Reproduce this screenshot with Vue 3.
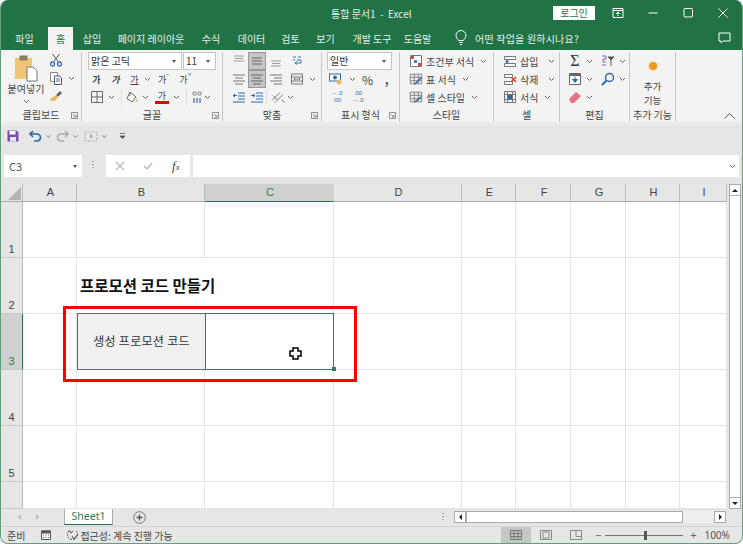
<script setup>
const tabs = [
  { name: '파일', w: 47 },
  { name: '홈', w: 25, active: true },
  { name: '삽입', w: 38 },
  { name: '페이지 레이아웃', w: 80 },
  { name: '수식', w: 40 },
  { name: '데이터', w: 41 },
  { name: '검토', w: 37 },
  { name: '보기', w: 33 },
  { name: '개발 도구', w: 60 },
  { name: '도움말', w: 31 },
]

const columns = [
  { name: 'A', w: 54 },
  { name: 'B', w: 128 },
  { name: 'C', w: 129, selected: true },
  { name: 'D', w: 128 },
  { name: 'E', w: 54 },
  { name: 'F', w: 55 },
  { name: 'G', w: 55 },
  { name: 'H', w: 54 },
  { name: 'I', w: 47 },
]

const rows = [
  { name: '1', h: 56 },
  { name: '2', h: 56 },
  { name: '3', h: 56, selected: true },
  { name: '4', h: 56 },
  { name: '5', h: 56 },
  { name: '', h: 27 },
]

const gridColumns = '22px ' + columns.map(c => c.w + 'px').join(' ')
const gridRows = '18px ' + rows.map(r => r.h + 'px').join(' ')

const cellClass = (col, row) => ({
  label: col.name === 'B' && row.name === '3',
  active: col.name === 'C' && row.name === '3',
  heading: col.name === 'B' && row.name === '2',
})

const cellText = (col, row) => {
  if (col.name === 'B' && row.name === '2') return '프로모션 코드 만들기'
  if (col.name === 'B' && row.name === '3') return '생성 프로모션 코드'
  return ''
}
</script>

<template>
  <div class="window">
    <svg class="defs" width="0" height="0">
      <symbol id="chev" viewBox="0 0 7 5"><path d="M1 1l2.500 2.500L6 1" fill="none" stroke="#666" stroke-width="1" /></symbol>
      <symbol id="lines" viewBox="0 0 14 12"><path d="M1 2h12M3 5h8M1 8h12M3 11h8" stroke="#777" stroke-width="1" /></symbol>
      <symbol id="launcher" viewBox="0 0 7 7"><path d="M.5.5h6v6h-6zM2 2l3 3M5 3v2H3" fill="none" stroke="#777" stroke-width=".8" /></symbol>
      <symbol id="tablecell" viewBox="0 0 16 14"><path d="M1.500 1.500h13v11h-13zM1.500 5h13M1.500 9h13M6 1.500v11M10.500 1.500v11" fill="none" stroke="#777" /></symbol>
    </svg>

    <header class="titlebar">
      <div class="doc-title">통합 문서1&nbsp; - &nbsp;Excel</div>
      <button class="login">로그인</button>
      <svg class="win-ic first" viewBox="0 0 12 10"><path d="M1 .5h10v9H1zM1 2.500h10M6 8V4M4 6l2-2 2 2" fill="none" stroke="#fff" /></svg>
      <svg class="win-ic" viewBox="0 0 12 10"><path d="M1.500 5h9" stroke="#fff" /></svg>
      <svg class="win-ic" viewBox="0 0 12 10"><rect x="2" y=".5" width="8.500" height="8.500" rx="1" fill="none" stroke="#fff" /></svg>
      <svg class="win-ic" viewBox="0 0 12 10"><path d="M1.500 .5l9 9M10.500 .5l-9 9" stroke="#fff" /></svg>
    </header>

    <nav class="tabs">
      <div v-for="t in tabs" :key="t.name" class="tab" :class="{ active: t.active }" :style="{ width: t.w + 'px' }">{{ t.name }}</div>
      <svg class="bulb" viewBox="0 0 12 15"><path d="M3.500 10.500C3 8.500 1 8 1 5.500a5 5 0 0 1 10 0c0 2.500-2 3-2.500 5zM4 12.500h4M5 14.500h2" fill="none" stroke="#fff" /></svg>
      <div class="tell-me">어떤 작업을 원하시나요?</div>
      <svg class="comment" viewBox="0 0 13 12"><path d="M1 1h11v8H5l-2 2V9H1z" fill="none" stroke="#fff" /></svg>
    </nav>

    <section class="ribbon">
      <div class="group g-clip">
        <div class="clip-body">
          <div class="paste">
            <svg class="paste-ic" viewBox="0 0 24 28">
              <rect x="1" y="4" width="17" height="21" fill="#f0c578" />
              <rect x="5.500" y="1.500" width="8" height="5" fill="#8a7a66" />
              <path d="M13 13h6l4 4v10H13z" fill="#fff" stroke="#777" />
            </svg>
            <div class="paste-text">붙여넣기</div>
            <svg class="chev"><use href="#chev" /></svg>
          </div>
          <div class="clip-tools">
            <svg class="ic" viewBox="0 0 14 14"><path d="M3.500 1l6 8M10.500 1l-6 8" stroke="#555" /><circle cx="3.500" cy="11" r="2" fill="none" stroke="#3d72b0" stroke-width="1.300" /><circle cx="10.500" cy="11" r="2" fill="none" stroke="#3d72b0" stroke-width="1.300" /></svg>
            <div class="clip-copy">
              <svg class="ic" viewBox="0 0 14 14"><path d="M1.500 1.500h7v9h-7z" fill="#fff" stroke="#888" /><path d="M5.500 5h5l2 2v6.500h-7z" fill="#fff" stroke="#555" /><path d="M7 8h4M7 10h4" stroke="#3d72b0" /></svg>
              <svg class="chev"><use href="#chev" /></svg>
            </div>
            <svg class="ic" viewBox="0 0 14 14"><path d="M7 6l4-4 2 2-4 4z" fill="#666" /><path d="M7 6l2 2-3 4H2l-1-2z" fill="#e8b75e" /></svg>
          </div>
        </div>
        <div class="group-label">클립보드<svg class="launch"><use href="#launcher" /></svg></div>
      </div>

      <div class="group g-font">
        <div class="group-body">
          <div class="line">
            <div class="combo font-name">맑은 고딕<span class="caret"></span></div>
            <div class="combo font-size">11<span class="caret"></span></div>
          </div>
          <div class="line font-line2">
            <span class="ga slot bold">가</span>
            <span class="ga slot bold italic">가</span>
            <span class="ga slot under">가</span>
            <svg class="chev"><use href="#chev" /></svg>
            <span class="ga slot grow">가<sup>ˆ</sup></span>
            <span class="ga slot shrink">가<sup>ˇ</sup></span>
          </div>
          <div class="line font-line3">
            <svg class="ic border-ic" viewBox="0 0 14 14"><path d="M1.500 1.500h11v11h-11zM7 1.500v11M1.500 7h11" fill="none" stroke="#666" /></svg>
            <svg class="chev"><use href="#chev" /></svg>
            <i class="vsep"></i>
            <svg class="ic bucket" viewBox="0 0 14 14"><path d="M5 2l6 5-4 5-5-3.500z" fill="#fff" stroke="#666" /><path d="M5 2v4" stroke="#666" /><path d="M12 8c-1 2-1.200 4 0 4s1-2 0-4z" fill="#e8b75e" /></svg>
            <svg class="chev"><use href="#chev" /></svg>
            <span class="font-color">가</span>
            <svg class="chev"><use href="#chev" /></svg>
            <i class="vsep"></i>
            <svg class="ic" viewBox="0 0 14 14"><path d="M3 2h3v3H3zM8 2h3v3H8z" fill="none" stroke="#777" stroke-width=".8" /><path d="M4 8v5M7 8v5M10 8v5" stroke="#2d68ad" stroke-width="1.200" /></svg>
            <svg class="chev"><use href="#chev" /></svg>
          </div>
        </div>
        <div class="group-label">글꼴<svg class="launch"><use href="#launcher" /></svg></div>
      </div>

      <div class="group g-align">
        <div class="group-body">
          <div class="align-grid">
            <svg class="ic" viewBox="0 0 14 12"><path d="M2 1h10M3 3.500h8M2 6h10" stroke="#999" /></svg>
            <div class="sel"><svg class="ic" viewBox="0 0 14 12"><path d="M2 3h10M2 6h10M2 9h10" stroke="#666" /></svg></div>
            <svg class="ic" viewBox="0 0 14 12"><path d="M2 6h10M3 8.500h8M2 11h10" stroke="#999" /></svg>
            <svg class="ic wrap-ic" viewBox="0 0 14 12"><path d="M3 2h3M8 2h3M3 5h2M7 5h4M11 5v3H5M7 6.500L5 8l2 1.500" fill="none" stroke="#2d68ad" stroke-width=".9" /></svg>
            <svg class="ic"><use href="#lines" /></svg>
            <div class="sel"><svg class="ic" viewBox="0 0 14 12"><path d="M1 2h12M3 5h8M1 8h12M3 11h8" stroke="#666" /></svg></div>
            <svg class="ic" viewBox="0 0 14 12"><path d="M1 2h12M5 5h8M1 8h12M5 11h8" stroke="#777" /></svg>
            <div class="merge">
              <svg class="ic" viewBox="0 0 14 13"><path d="M1.500 1.500h11v10h-11zM1.500 4.500h11M1.500 8.500h11M4 6.500h6M5 5.500L4 6.500l1 1M9 5.500l1 1-1 1" fill="none" stroke="#777" /></svg>
              <svg class="chev"><use href="#chev" /></svg>
            </div>
            <svg class="ic" viewBox="0 0 14 12"><path d="M6 2h7M6 5h7M6 8h7M1 11h12M5 4.500H1M3 3L1 4.500 3 6" fill="none" stroke="#2d68ad" /></svg>
            <svg class="ic" viewBox="0 0 14 12"><path d="M6 2h7M6 5h7M6 8h7M1 11h12M1 4.500h4M3 3l2 1.500L3 6" fill="none" stroke="#2d68ad" /></svg>
            <div class="orient">
              <svg class="ic" viewBox="0 0 14 13"><path d="M1 10L9 2M4 12l8-8M2 5l4 4M11 9l2 3" fill="none" stroke="#777" /></svg>
              <svg class="chev"><use href="#chev" /></svg>
            </div>
          </div>
        </div>
        <div class="group-label">맞춤<svg class="launch"><use href="#launcher" /></svg></div>
      </div>

      <div class="group g-num">
        <div class="group-body">
          <div class="line"><div class="combo num-format">일반<span class="caret"></span></div></div>
          <div class="line num-line">
            <svg class="ic" viewBox="0 0 14 12"><rect x=".5" y="1" width="11" height="7" fill="#fff" stroke="#2d68ad" /><circle cx="6" cy="4.500" r="2" fill="#2d68ad" /><circle cx="10" cy="9" r="2.500" fill="#e8b75e" /></svg>
            <svg class="chev"><use href="#chev" /></svg>
            <span class="percent">%</span>
            <span class="comma">,</span>
          </div>
          <div class="line num-line3">
            <span class="dec">←.0<br />.00</span>
            <span class="dec">.00<br />→.0</span>
          </div>
        </div>
        <div class="group-label">표시 형식<svg class="launch"><use href="#launcher" /></svg></div>
      </div>

      <div class="group g-style">
        <div class="group-body">
          <div class="line list-line">
            <svg class="ic" viewBox="0 0 14 14"><path d="M1.500 1.500h11v11h-11z" fill="#fff" stroke="#777" /><path d="M2 2h3v3H2zM9 9h3v3H9z" fill="#c0504d" /><path d="M5 6h3v3H5z" fill="#4f81bd" /></svg>
            <span>조건부 서식</span><svg class="chev"><use href="#chev" /></svg>
          </div>
          <div class="line list-line">
            <svg class="ic" viewBox="0 0 14 14"><use href="#tablecell" /><path d="M13 6l-6 6-2 1 1-2 6-6z" fill="#2d68ad" /></svg>
            <span>표 서식</span><svg class="chev"><use href="#chev" /></svg>
          </div>
          <div class="line list-line">
            <svg class="ic" viewBox="0 0 14 14"><use href="#tablecell" /><path d="M13 7l-6 5-2 1 1-2 6-5z" fill="#2d68ad" /></svg>
            <span>셀 스타일</span><svg class="chev"><use href="#chev" /></svg>
          </div>
        </div>
        <div class="group-label">스타일</div>
      </div>

      <div class="group g-cell">
        <div class="group-body">
          <div class="line list-line">
            <svg class="ic" viewBox="0 0 14 14"><path d="M1.500 2.500h11v3h-11zM1.500 9.500h11v3h-11z" fill="#fff" stroke="#777" /><path d="M4 6v3M2.500 7.500h3" stroke="#2d68ad" stroke-width="1.400" /></svg>
            <span>삽입</span><svg class="chev far"><use href="#chev" /></svg>
          </div>
          <div class="line list-line">
            <svg class="ic" viewBox="0 0 14 14"><path d="M1.500 2.500h8v3h-8zM1.500 9.500h8v3h-8z" fill="#fff" stroke="#777" /><path d="M8 5l5 5M13 5l-5 5" stroke="#d83b2c" stroke-width="1.400" /></svg>
            <span>삭제</span><svg class="chev far"><use href="#chev" /></svg>
          </div>
          <div class="line list-line">
            <svg class="ic" viewBox="0 0 14 14"><path d="M1.500 1.500h11v11h-11zM4.500 1.500v11M9.500 1.500v11M1.500 4.500h11M1.500 9.500h11" fill="none" stroke="#777" /><path d="M5 5h4v4H5z" fill="#2d68ad" /></svg>
            <span>서식</span><svg class="chev"><use href="#chev" /></svg>
          </div>
        </div>
        <div class="group-label">셀</div>
      </div>

      <div class="group g-edit">
        <div class="group-body">
          <div class="line edit-line">
            <span class="sigma">Σ</span><svg class="chev"><use href="#chev" /></svg>
            <svg class="ic narrow" viewBox="0 0 14 14"><path d="M1 2h4M5 2v3H2v3h3M1 11h4" fill="none" stroke="#8d5fb3" /><path d="M7 3h6l-3 3zM10 6v6" fill="#555" stroke="#555" /></svg><svg class="chev"><use href="#chev" /></svg>
          </div>
          <div class="line edit-line">
            <svg class="ic" viewBox="0 0 14 14"><path d="M1.500 1.500h11v11h-11z" fill="#fff" stroke="#666" /><path d="M1 3h12" stroke="#666" stroke-width="2" /><path d="M7 4.500v5M4.500 7.500L7 10.500l2.500-3z" fill="#2d68ad" stroke="#2d68ad" /></svg>
            <svg class="chev"><use href="#chev" /></svg>
            <svg class="ic narrow" viewBox="0 0 14 14"><circle cx="8.500" cy="5.500" r="4" fill="none" stroke="#2d68ad" stroke-width="1.500" /><path d="M5.500 8.500L1 13" stroke="#2d68ad" stroke-width="2" /></svg><svg class="chev"><use href="#chev" /></svg>
          </div>
          <div class="line edit-line">
            <svg class="ic" viewBox="0 0 14 14"><path d="M1 9l7-7 5 4-7 7H3z" fill="#e8708a" /></svg>
            <svg class="chev"><use href="#chev" /></svg>
          </div>
        </div>
        <div class="group-label">편집</div>
      </div>

      <div class="group g-addin">
        <div class="group-body addin-body">
          <i class="dot"></i>
          <div class="addin-text">추가<br />기능</div>
        </div>
        <div class="group-label">추가 기능</div>
      </div>

      <svg class="collapse" viewBox="0 0 11 6"><path d="M.5 5.500l5-5 5 5" fill="none" stroke="#555" /></svg>
    </section>

    <div class="qat">
      <svg class="qat-ic save" viewBox="0 0 12 12"><path d="M.5.5h9l2 2v9H.5z" fill="#7a4fa5" /><path d="M2.500 1h6v3.500h-6z" fill="#fff" /><path d="M3 7h6v4.500H3z" fill="#e8dff0" /></svg>
      <svg class="qat-ic undo" viewBox="0 0 13 12"><path d="M4 1L1 4l3 3M1 4h7a3.500 3.500 0 0 1 0 7H5" fill="none" stroke="#2d68ad" stroke-width="1.700" /></svg>
      <svg class="chev"><use href="#chev" /></svg>
      <svg class="qat-ic redo" viewBox="0 0 13 12"><path d="M9 1l3 3-3 3M12 4H5a3.500 3.500 0 0 0 0 7h3" fill="none" stroke="#aaa" stroke-width="1.700" /></svg>
      <svg class="chev"><use href="#chev" /></svg>
      <svg class="qat-ic touch" viewBox="0 0 14 12"><path d="M1 2h12v9H1z" fill="none" stroke="#aaa" stroke-dasharray="2 1.500" /><path d="M6 4l3 2-3 3z" fill="#aaa" /></svg>
      <svg class="chev"><use href="#chev" /></svg>
      <svg class="qat-more" viewBox="0 0 5 6"><path d="M0 .5h5M0 3l2.500 2.500L5 3z" fill="#555" stroke="#555" stroke-width=".7" /></svg>
    </div>

    <div class="formula-bar">
      <div class="name-box">C3<span class="caret"></span></div>
      <div class="grip"></div>
      <div class="fx-box">
        <svg class="fx-ic" viewBox="0 0 10 10"><path d="M1 1l8 8M9 1L1 9" stroke="#bbb" stroke-width="1.200" /></svg>
        <svg class="fx-ic" viewBox="0 0 10 10"><path d="M1 5l3 3 5-6" fill="none" stroke="#bbb" stroke-width="1.500" /></svg>
        <span class="fx">f<small>x</small></span>
      </div>
      <div class="formula-input"><svg class="chev"><use href="#chev" /></svg></div>
    </div>

    <div class="sheet-area">
      <div class="sheet" :style="{ gridTemplateColumns: gridColumns, gridTemplateRows: gridRows }">
        <div class="corner"><i></i></div>
        <div v-for="c in columns" :key="c.name" class="col-head" :class="{ on: c.selected }">{{ c.name }}</div>
        <template v-for="r in rows" :key="r.name">
          <div class="row-head" :class="{ on: r.selected }">{{ r.name }}</div>
          <div v-for="c in columns" :key="c.name" class="cell" :class="cellClass(c, r)">{{ cellText(c, r) }}</div>
        </template>
        <div class="red-box"></div>
        <i class="handle"></i>
        <svg class="cursor" viewBox="0 0 13 13"><path d="M4 1h5v3h3v5H9v3H4V9H1V4h3z" fill="#fff" stroke="#000" stroke-width="1.500" /></svg>
      </div>
      <div class="vscroll">
        <div class="sb-btn"><i class="tri up"></i></div>
        <div class="sb-thumb"></div>
        <div class="sb-btn"><i class="tri down"></i></div>
      </div>
    </div>

    <div class="sheet-tabs">
      <i class="nav-tri left"></i>
      <i class="nav-tri right"></i>
      <div class="sheet-tab">Sheet1</div>
      <svg class="add-sheet" viewBox="0 0 13 13"><circle cx="6.500" cy="6.500" r="5.800" fill="none" stroke="#777" /><path d="M6.500 3.500v6M3.500 6.500h6" stroke="#555" stroke-width="1.300" /></svg>
      <div class="grip tab-grip"></div>
      <div class="hscroll">
        <div class="sb-btn"><i class="tri lf"></i></div>
        <div class="h-thumb"></div>
        <div class="h-rest"></div>
        <div class="sb-btn"><i class="tri rt"></i></div>
      </div>
    </div>

    <footer class="status">
      <span class="ready">준비</span>
      <svg class="st-ic macro" viewBox="0 0 10 10"><path d="M.5 1h9v8.500h-9z" fill="#fff" stroke="#555" /><path d="M.5 1h9v2h-9zM2 5h1M4.500 5h1M7 5h1M2 7.500h1M4.500 7.500h1M7 7.500h1" fill="#555" stroke="#555" /></svg>
      <svg class="st-ic access" viewBox="0 0 13 12"><path d="M3 2a5 5 0 1 0 7 0" fill="none" stroke="#555" stroke-dasharray="2 1" /><path d="M3 1l2 3 2-2M6 7l2 3 4-5" fill="none" stroke="#444" /></svg>
      <span class="access-text">접근성: 계속 진행 가능</span>
      <div class="views">
        <div class="view on"><svg viewBox="0 0 12 10"><path d="M.5.5h11v9H.5zM.5 3.500h11M.5 6.500h11M4 .5v9M8 .5v9" fill="none" stroke="#777" /></svg></div>
        <div class="view"><svg viewBox="0 0 12 10"><path d="M.5.5h11v9H.5zM3 2h6v6H3z" fill="none" stroke="#888" /></svg></div>
        <div class="view"><svg viewBox="0 0 12 10"><path d="M.5.5h11v9H.5zM6 .5v6h5.500" fill="none" stroke="#888" /></svg></div>
      </div>
      <span class="zoom-sign">−</span>
      <div class="slider"><i></i></div>
      <span class="zoom-sign">+</span>
      <span class="zoom-val">100%</span>
    </footer>
  </div>
</template>

<style scoped>
.window {
  width: 743px;
  height: 544px;
  box-sizing: border-box;
  border: 1.5px solid #5f9f80;
  border-top: 0;
  border-radius: 8px;
  overflow: hidden;
  background: #e6e6e6;
  font-family: "Noto Sans CJK KR", "Noto Sans", sans-serif;
  font-size: 10px;
  color: #444;
  display: flex;
  flex-direction: column;
}
.defs { position: absolute; }
.chev { width: 7px; height: 5px; flex: none; }
.ic { width: 14px; height: 14px; flex: none; }

.titlebar {
  height: 26px;
  background: #217346;
  display: flex;
  align-items: center;
  padding-left: 330px;
  color: #e6f0ea;
  flex: none;
}
.doc-title { width: 222px; white-space: nowrap; }
.login {
  width: 42px;
  height: 14px;
  padding: 0;
  border: 0;
  background: #fff;
  color: #217346;
  font: inherit;
  line-height: 14px;
}
.win-ic { width: 12px; height: 10px; margin-left: 23px; flex: none; }
.win-ic.first { margin-left: 17px; }

.tabs {
  height: 24px;
  background: #217346;
  display: flex;
  align-items: flex-end;
  flex: none;
  color: #e6f0ea;
}
.tab { height: 23px; line-height: 23px; text-align: center; flex: none; white-space: nowrap; }
.tab.active { background: #f3f3f3; color: #217346; }
.bulb { width: 12px; height: 15px; margin: 0 0 5px 22px; flex: none; }
.tell-me { height: 23px; line-height: 23px; margin-left: 8px; white-space: nowrap; letter-spacing: .2px; }
.comment { width: 13px; height: 12px; margin: 0 0 6px 139px; flex: none; }

.ribbon {
  height: 72px;
  background: #f3f3f3;
  display: flex;
  flex: none;
  position: relative;
  border-bottom: 3px solid #ebebeb;
}
.group {
  height: 70px;
  margin-top: 2px;
  box-sizing: border-box;
  border-right: 1px solid #c8c8c8;
  display: flex;
  flex-direction: column;
  flex: none;
}
.group-body { height: 55px; flex: none; }
.group-label {
  position: relative;
  height: 15px;
  line-height: 15px;
  text-align: center;
  white-space: nowrap;
  color: #444;
}
.launch { position: absolute; right: 3px; top: 5px; width: 7px; height: 7px; }
.line { height: 18px; display: flex; align-items: center; }

.g-clip { width: 81px; }
.clip-body { height: 55px; display: flex; flex: none; }
.paste { width: 45px; display: flex; flex-direction: column; align-items: center; padding-left: 5px; box-sizing: border-box; }
.paste-ic { width: 24px; height: 28px; flex: none; margin-top: 2px; }
.paste-text { line-height: 13px; white-space: nowrap; }
.paste .chev { margin-top: 4px; }
.clip-tools { display: flex; flex-direction: column; gap: 4px; padding-left: 3px; margin-top: 1px; }
.clip-copy { display: flex; align-items: center; gap: 5px; }

.g-font { width: 141px; }
.combo {
  position: relative;
  height: 18px;
  box-sizing: border-box;
  background: #fff;
  border: 1px solid #c6c6c6;
  line-height: 15px;
  padding-left: 2px;
  color: #333;
}
.caret { position: absolute; border: 2.5px solid transparent; border-top: 3px solid #555; border-bottom: 0; right: 5px; top: 7px; }
.font-name { width: 94px; margin-left: 6px; }
.font-size { width: 33px; margin-left: 1px; }
.ga { font-weight: 400; color: #444; }
.slot { width: 19px; text-align: center; flex: none; font-size: 9px; }
.bold { font-weight: 700; }
.italic { font-style: italic; }
.under { text-decoration: underline; }
sup { font-size: 7px; line-height: 0; color: #2d68ad; }
.font-line2 { padding-left: 5px; }
.grow { margin-left: 3px; }
.shrink { margin-left: 3px; }
.font-line3 { padding-left: 8px; }
.border-ic { margin-right: 4px; }
.vsep { width: 1px; height: 16px; background: #dcdcdc; margin: 0 3px 0 6px; flex: none; }
.bucket { margin-right: 3px; }
.font-color {
  width: 14px;
  margin: 0 4px 0 6px;
  text-align: center;
  line-height: 11px;
  font-size: 9px;
  border-bottom: 3px solid #e00000;
}

.g-align { width: 99px; }
.align-grid {
  display: grid;
  grid-template-columns: 18px 18px 19px 36px;
  grid-auto-rows: 18px;
  padding-left: 7px;
  justify-items: center;
  align-items: center;
}
.sel {
  width: 18px;
  height: 18px;
  box-sizing: border-box;
  background: #c6c6c6;
  border: 1px solid #999;
  display: flex;
  align-items: center;
  justify-content: center;
}
.wrap-ic { justify-self: start; margin-left: 5px; }
.merge { display: flex; align-items: center; gap: 5px; justify-self: start; padding-left: 5px; }
.orient { display: flex; align-items: center; gap: 2px; grid-column: 3 / 5; justify-self: start; border-left: 1px solid #dcdcdc; padding-left: 4px; }

.g-num { width: 78px; }
.num-format { width: 65px; margin-left: 5px; }
.num-line { padding-left: 7px; gap: 6px; }
.percent { font-size: 12px; }
.comma { font-size: 11px; font-weight: 700; margin-left: 6px; line-height: 8px; }
.num-line3 { padding-left: 8px; gap: 7px; }
.dec {
  font-family: "Liberation Sans", sans-serif;
  font-size: 6px;
  line-height: 7px;
  color: #2d68ad;
  width: 14px;
  text-align: center;
  white-space: nowrap;
}

.g-style { width: 94px; }
.list-line { padding-left: 9px; gap: 3px; white-space: nowrap; }
.list-line .chev { margin-left: 3px; }
.g-cell { width: 66px; }
.g-cell .list-line .far { margin-left: 7px; }

.g-edit { width: 70px; }
.edit-line { padding-left: 8px; gap: 4px; }
.sigma { width: 14px; text-align: center; font-size: 16px; line-height: 16px; color: #333; font-family: "Liberation Serif", serif; flex: none; }
.narrow { margin-left: 4px; }

.g-addin { width: 46px; }
.addin-body { display: flex; flex-direction: column; align-items: center; }
.dot { width: 8px; height: 8px; border-radius: 50%; background: #f59a1c; box-shadow: 0 0 2px #f8c070; margin-top: 10px; }
.addin-text { margin-top: 9px; font-size: 9.6px; line-height: 14px; text-align: center; }
.collapse { width: 11px; height: 6px; position: absolute; left: 723px; top: 63px; }

.qat {
  height: 22px;
  display: flex;
  align-items: center;
  padding-left: 6px;
  flex: none;
}
.qat .chev { transform: scale(.8); }
.qat-ic { height: 12px; width: 12px; flex: none; }
.undo { margin-left: 10px; width: 13px; margin-right: 3px; }
.redo { margin-left: 4px; width: 13px; margin-right: 3px; }
.touch { margin-left: 5px; width: 14px; margin-right: 3px; }
.qat-more { width: 5px; height: 6px; margin-left: 12px; }

.formula-bar {
  height: 22px;
  margin-top: 8px;
  display: flex;
  flex: none;
  padding-left: 3px;
  padding-right: 3px;
}
.name-box {
  position: relative;
  width: 78px;
  background: #fff;
  font-size: 11px;
  line-height: 22px;
  padding-left: 5px;
  box-sizing: border-box;
  color: #555;
}
.name-box .caret { top: 10px; }
.grip {
  width: 2px;
  height: 9px;
  margin: 6px 12px 0 10px;
  flex: none;
  background: repeating-linear-gradient(#aaa 0 1px, transparent 1px 3px);
}
.fx-box {
  width: 84px;
  background: #fff;
  display: flex;
  align-items: center;
  padding-left: 9px;
  box-sizing: border-box;
  gap: 18px;
  flex: none;
}
.fx-ic { width: 10px; height: 10px; flex: none; }
.fx { font-family: "Liberation Serif", serif; font-style: italic; font-size: 13px; color: #444; margin-left: 1px; }
.fx small { font-size: 9px; }
.formula-input {
  margin-left: 3px;
  flex: 1;
  background: #fff;
  display: flex;
  align-items: center;
  justify-content: flex-end;
  padding-right: 3px;
}

.sheet-area {
  height: 325px;
  margin-top: 7px;
  display: flex;
  flex: none;
}
.sheet { display: grid; position: relative; width: 726px; height: 325px; background: #fff; overflow: hidden; flex: none; }
.corner { background: #e6e6e6; border-right: 1px solid #bbb; border-bottom: 1px solid #aaa; position: relative; box-sizing: border-box; }
.corner i {
  position: absolute;
  right: 1px;
  bottom: 1px;
  border-style: solid;
  border-width: 0 0 13px 13px;
  border-color: transparent transparent #b4b4b4 transparent;
}
.col-head {
  background: #e6e6e6;
  border-right: 1px solid #bbb;
  border-bottom: 1px solid #aaa;
  box-sizing: border-box;
  padding-left: 2px;
  text-align: center;
  font-family: "Liberation Sans", sans-serif;
  font-size: 11px;
  line-height: 17px;
  color: #444;
}
.col-head.on { background: #d0d0d0; color: #2f7d55; border-bottom: 1.5px solid #217346; border-right-color: #d0d0d0; }
.row-head {
  background: #e6e6e6;
  border-right: 1px solid #bbb;
  border-bottom: 1px solid #c8c8c8;
  box-sizing: border-box;
  display: flex;
  align-items: flex-end;
  justify-content: center;
  padding-bottom: 2px;
  font-family: "Liberation Sans", sans-serif;
  font-size: 11px;
  color: #444;
}
.row-head.on { background: #d0d0d0; color: #2f7d55; border-right: 1.5px solid #217346; }
.cell {
  border-right: 1px solid #e4e4e4;
  border-bottom: 1px solid #e4e4e4;
  box-sizing: border-box;
  min-width: 0;
}
.cell.heading {
  border-right: 0;
  font-size: 15.5px;
  font-weight: 700;
  color: #111;
  line-height: 54px;
  padding-left: 3px;
  white-space: nowrap;
  overflow: visible;
}
.cell.label {
  background: #f0f0f0;
  border: 1px solid #666;
  border-right: 0;
  border-top: 1.5px solid #666;
  text-align: center;
  line-height: 53px;
  font-size: 12px;
  letter-spacing: .3px;
  color: #333;
  margin-top: -1px;
}
.cell.active {
  border: 1.5px solid #2f8058;
  background: #fff;
  margin-top: -1px;
}
.red-box {
  position: absolute;
  left: 62px;
  top: 122px;
  width: 294px;
  height: 76px;
  box-sizing: border-box;
  border: 3.5px solid #f00;
}
.handle { position: absolute; left: 331px; top: 183px; width: 4px; height: 4px; background: #2f8058; }
.cursor { position: absolute; left: 288px; top: 163px; width: 13px; height: 13px; }

.vscroll { width: 12px; margin-left: 2px; display: flex; flex-direction: column; flex: none; }
.sb-btn {
  width: 12px;
  height: 12px;
  box-sizing: border-box;
  background: #fff;
  border: 1px solid #ababab;
  display: flex;
  align-items: center;
  justify-content: center;
  flex: none;
}
.sb-thumb { flex: 1; background: #fff; border: 1px solid #ababab; border-top: 0; border-bottom: 0; width: 12px; box-sizing: border-box; }
.tri { width: 0; height: 0; border: 3px solid transparent; }
.tri.up { border-bottom-color: #222; border-top: 0; }
.tri.down { border-top-color: #222; border-bottom: 0; }
.tri.lf { border-right-color: #222; border-left: 0; }
.tri.rt { border-left-color: #222; border-right: 0; }

.sheet-tabs {
  height: 17px;
  display: flex;
  align-items: flex-start;
  flex: none;
  position: relative;
}
.nav-tri { width: 0; height: 0; border: 3px solid transparent; margin-top: 5px; flex: none; }
.nav-tri.left { border-right-color: #bbb; border-left: 0; margin-left: 17px; }
.nav-tri.right { border-left-color: #bbb; border-right: 0; margin-left: 15px; }
.sheet-tab {
  width: 49px;
  height: 16px;
  margin-left: 25px;
  background: #fff;
  border-left: 1px solid #aaa;
  border-right: 1px solid #aaa;
  border-bottom: 1.5px solid #217346;
  box-sizing: border-box;
  text-align: center;
  color: #2f7d55;
  font-size: 10.5px;
  line-height: 14px;
  font-family: "Noto Sans", sans-serif;
  flex: none;
}
.add-sheet { width: 13px; height: 13px; margin: 2px 0 0 20px; flex: none; }
.tab-grip { margin: 4px 10px 0 296px; }
.hscroll { display: flex; margin: 2px 0 0 0; width: 272px; }
.h-thumb { width: 217px; height: 12px; background: #fff; border: 1px solid #ababab; box-sizing: border-box; flex: none; }
.h-rest { width: 31px; height: 12px; background: #efefef; flex: none; }

.status {
  height: 16px;
  display: flex;
  align-items: center;
  border-top: 1px solid #d4d4d4;
  flex: none;
}
.ready { margin-left: 6px; }
.st-ic { flex: none; }
.macro { width: 10px; height: 10px; margin-left: 16px; }
.access { width: 13px; height: 12px; margin-left: 15px; }
.access-text { margin-left: 1px; white-space: nowrap; width: 421px; }
.views { display: flex; height: 16px; }
.view { width: 30px; display: flex; align-items: center; justify-content: center; }
.view svg { width: 12px; height: 10px; }
.view.on { background: #c6c6c6; }
.zoom-sign { width: 8px; text-align: center; font-size: 11px; color: #666; margin-left: 3px; font-family: "Liberation Sans", sans-serif; }
.slider { position: relative; width: 78px; height: 1px; background: #777; margin: 0 3px 0 3px; }
.slider i { position: absolute; left: 39px; top: -4px; width: 3px; height: 9px; background: #555; }
.zoom-val { margin-left: 7px; white-space: nowrap; color: #555; font-family: "Noto Sans", sans-serif; }
</style>

<style>
html, body { margin: 0; background: #fff; }
</style>
